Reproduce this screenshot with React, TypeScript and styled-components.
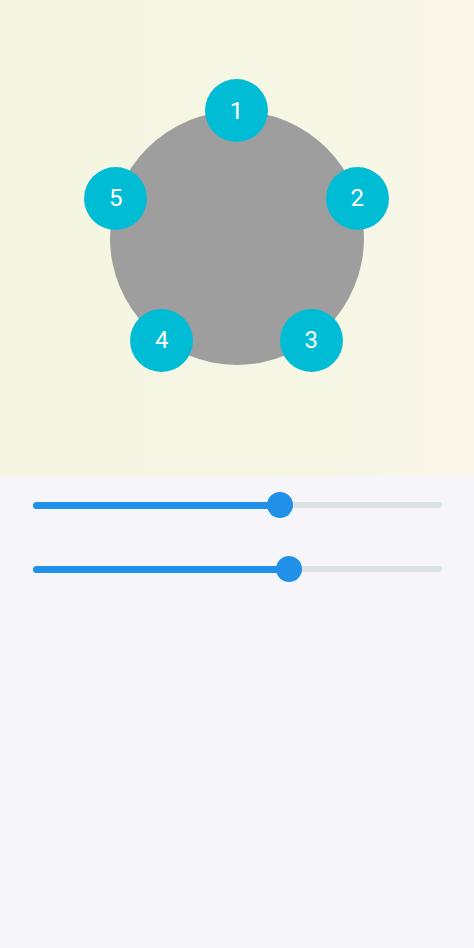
import React from 'react'
import styled, { createGlobalStyle } from 'styled-components'

const GlobalStyle = createGlobalStyle`
  html, body {
    margin: 0;
    padding: 0;
    background: #f6f6fa;
    font-family: Roboto, "Noto Sans", sans-serif;
  }
`

const STAGE = { cx: 237, cy: 238, r: 127 }
const NODE_RADIUS = 127
const NODES = [1, 2, 3, 4, 5]

const SLIDERS = [0.604, 0.626]

const App = () => {
  return (
    <Page>
      <GlobalStyle />
      <Stage>
        <Dial>
          {NODES.map((n, i) => {
            const angle = (-90 + i * 72) * (Math.PI / 180)
            const x = STAGE.r + Math.cos(angle) * NODE_RADIUS
            const y = STAGE.r + Math.sin(angle) * NODE_RADIUS
            return (
              <Node key={n} style={{ left: x, top: y }}>
                {n}
              </Node>
            )
          })}
        </Dial>
      </Stage>
      <Controls>
        {SLIDERS.map((v, i) => (
          <Slider key={i}>
            <Track />
            <ActiveTrack style={{ width: `${v * 100}%` }} />
            <Thumb style={{ left: `${v * 100}%` }} />
          </Slider>
        ))}
      </Controls>
    </Page>
  )
}

export default App

const Page = styled.div`
  width: 474px;
  height: 948px;
  display: flex;
  flex-direction: column;
  overflow: hidden;
`

const Stage = styled.div`
  height: 476px;
  flex-shrink: 0;
  display: flex;
  justify-content: center;
  padding-top: 111px;
  box-sizing: border-box;
  background: linear-gradient(90deg, #f4f6e2 0%, #f5f7e4 60%, #fbf6ea 100%);
`

const Dial = styled.div`
  position: relative;
  width: ${STAGE.r * 2}px;
  height: ${STAGE.r * 2}px;
  border-radius: 50%;
  background: #9e9e9e;
`

const Node = styled.div`
  position: absolute;
  width: 63px;
  height: 63px;
  margin: -32px 0 0 -32px;
  border-radius: 50%;
  background: #00bcd4;
  color: #ffffff;
  font-size: 24px;
  display: flex;
  align-items: center;
  justify-content: center;
`

const Controls = styled.div`
  flex: 1;
  display: flex;
  flex-direction: column;
  gap: 38px;
  padding: 16px 32px 0 33px;
  background: #f6f6fa;
`

const Slider = styled.div`
  position: relative;
  height: 26px;
`

const Track = styled.div`
  position: absolute;
  left: 0;
  right: 0;
  top: 10px;
  height: 6px;
  border-radius: 3px;
  background: #dbe2e6;
`

const ActiveTrack = styled.div`
  position: absolute;
  left: 0;
  top: 9.5px;
  height: 7px;
  border-radius: 4px;
  background: #2190e8;
`

const Thumb = styled.div`
  position: absolute;
  top: 0;
  width: 26px;
  height: 26px;
  margin-left: -13px;
  border-radius: 50%;
  background: #2190e8;
`
